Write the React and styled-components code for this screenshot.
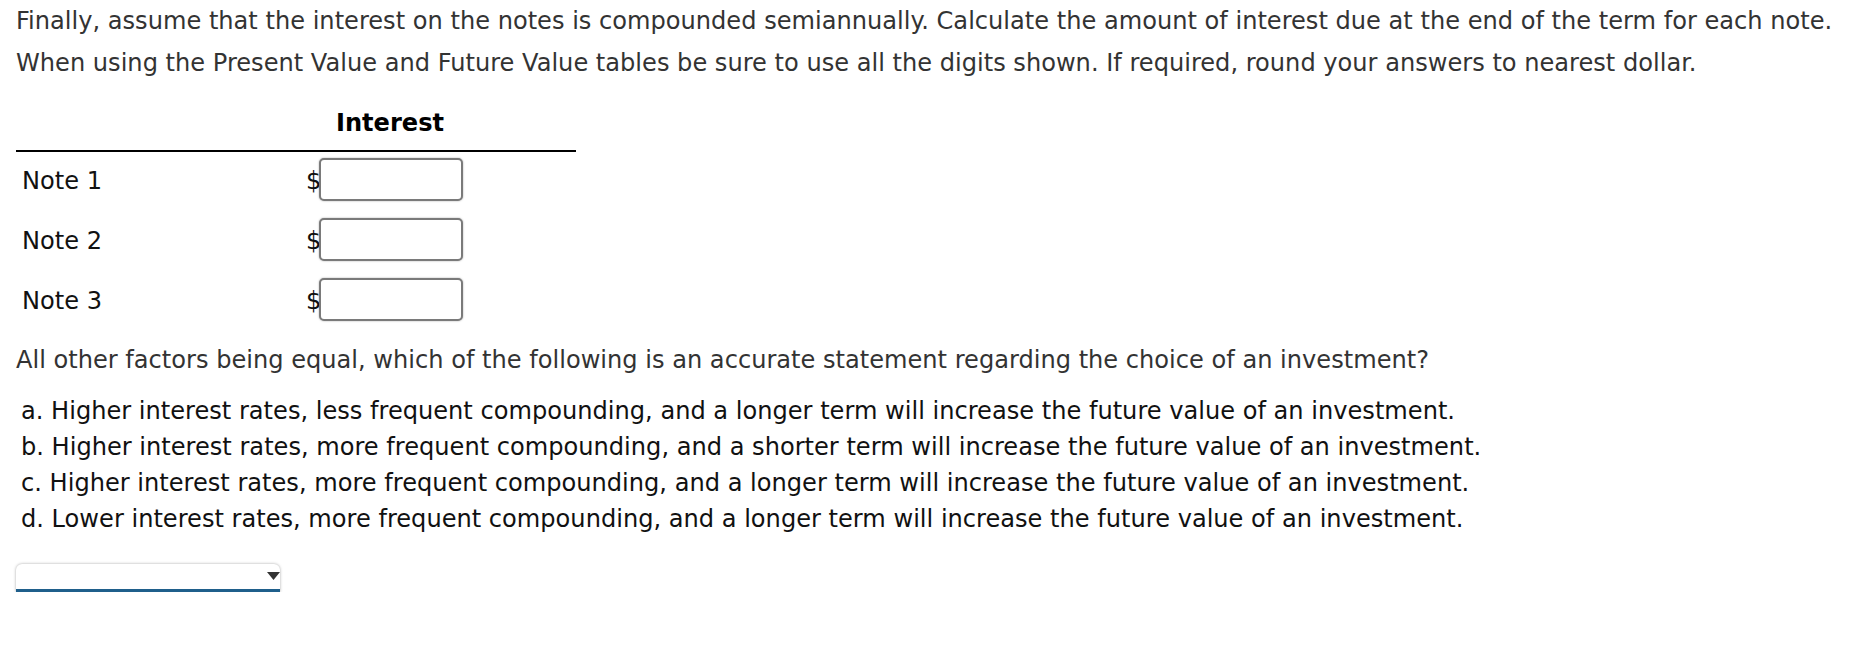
import styled, { createGlobalStyle } from "styled-components";

const GlobalStyle = createGlobalStyle`
    body {
        margin: 0;
        background: #fff;
        font-family: "DejaVu Sans", Verdana, sans-serif;
        font-size: 24.1px;
    }
`;

const Page = styled.div`
    padding: 0 16px;
`;

const Para = styled.p`
    margin: 0;
    line-height: 42px;
    color: #333;
`;

const Question = styled(Para)`
    margin-top: 7px;
`;

const Table = styled.div`
    display: flex;
    flex-direction: column;
    width: 560px;
`;

const Grid = styled.div`
    display: grid;
    grid-template-columns: 290px 168px 1fr;
`;

const Row = styled(Grid)`
    height: 60px;
`;

const HeadRow = styled(Grid)`
    border-bottom: 2px solid #000;
`;

const HeadCell = styled.div`
    padding: 25px 0 13px;
    line-height: 28px;
    font-weight: bold;
    color: #000;
    text-align: center;
`;

const Label = styled.div`
    padding: 8px 0 0 6px;
    line-height: 43px;
    color: #111;
`;

const ValueCell = styled.div`
    display: flex;
    align-items: flex-start;
    padding-top: 6px;
`;

const Dollar = styled.span`
    padding-top: 2px;
    line-height: 43px;
    color: #111;
    margin-right: -2px;
`;

const Input = styled.input`
    box-sizing: border-box;
    width: 144px;
    height: 43px;
    margin: 0;
    border: 2px solid #7a7a7a;
    border-radius: 5px;
    background: #fff;
    box-shadow: 0 0 2px rgba(0, 0, 0, 0.35);
    font: inherit;
`;

const Options = styled.div`
    margin-top: 12px;
    padding-left: 5px;
    color: #111;
    line-height: 36px;
`;

const Option = styled.div``;

const Select = styled.div`
    box-sizing: border-box;
    position: relative;
    width: 264px;
    height: 28px;
    margin-top: 27px;
    background: #fff;
    border-radius: 6px 6px 0 0;
    border-bottom: 3px solid #1f5f8b;
    box-shadow: 0 0 3px rgba(0, 0, 0, 0.35);
    & > svg {
        position: absolute;
        right: 0;
        top: 8px;
    }
`;

const options = [
    "a. Higher interest rates, less frequent compounding, and a longer term will increase the future value of an investment.",
    "b. Higher interest rates, more frequent compounding, and a shorter term will increase the future value of an investment.",
    "c. Higher interest rates, more frequent compounding, and a longer term will increase the future value of an investment.",
    "d. Lower interest rates, more frequent compounding, and a longer term will increase the future value of an investment.",
];

const notes = ["Note 1", "Note 2", "Note 3"];

export default function App() {
    return (
        <Page>
            <GlobalStyle />
            <Para>
                Finally, assume that the interest on the notes is compounded semiannually. Calculate the amount of interest due at the end of the term for each note.
            </Para>
            <Para>
                When using the Present Value and Future Value tables be sure to use all the digits shown. If required, round your answers to nearest dollar.
            </Para>
            <Table>
                <HeadRow>
                    <HeadCell />
                    <HeadCell>Interest</HeadCell>
                    <HeadCell />
                </HeadRow>
                {notes.map(n => (
                    <NoteRow key={n} label={n} />
                ))}
            </Table>
            <Question>
                All other factors being equal, which of the following is an accurate statement regarding the choice of an investment?
            </Question>
            <Options>
                {options.map(o => (
                    <Option key={o}>{o}</Option>
                ))}
            </Options>
            <Select>
                <svg width="13" height="8" viewBox="0 0 13 8">
                    <path d="M0 0 H13 L6.5 8 Z" fill="#333" />
                </svg>
            </Select>
        </Page>
    );
}

function NoteRow({ label }) {
    return (
        <Row>
            <Label>{label}</Label>
            <ValueCell>
                <Dollar>$</Dollar>
                <Input type="text" aria-label={label} />
            </ValueCell>
        </Row>
    );
}
